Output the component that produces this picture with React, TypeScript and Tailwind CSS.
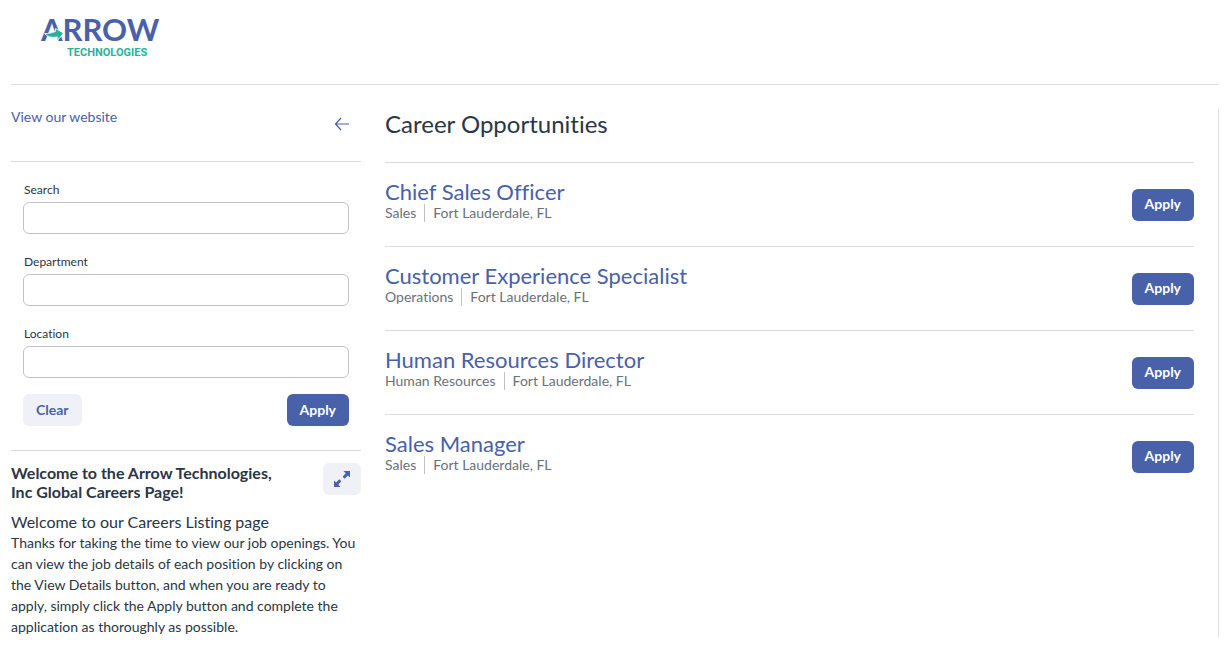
const jobs = [
  { title: "Chief Sales Officer", department: "Sales", location: "Fort Lauderdale, FL" },
  { title: "Customer Experience Specialist", department: "Operations", location: "Fort Lauderdale, FL" },
  { title: "Human Resources Director", department: "Human Resources", location: "Fort Lauderdale, FL" },
  { title: "Sales Manager", department: "Sales", location: "Fort Lauderdale, FL" },
];

function Logo() {
  return (
    <svg className="block h-12 w-32" viewBox="0 0 128 48" role="img" aria-label="Arrow Technologies">
      <text x="1" y="30" fill="#4961a8" fontFamily="Lato, sans-serif" fontSize="31" fontWeight="700">
        ARROW
      </text>
      <path
        d="M4.5 22.5 C8 23 12 21.5 15.5 20.5 L15.5 17.5 L23.5 22 L18.5 28.5 L17.5 25.8 C13 27 8 26.5 4.5 22.5 Z"
        fill="#26b39b"
        stroke="#ffffff"
        strokeWidth="0.8"
      />
      <text x="27" y="45" fill="#26b39b" fontFamily="Roboto, sans-serif" fontSize="11" fontWeight="700">
        TECHNOLOGIES
      </text>
    </svg>
  );
}

function ApplyButton() {
  return (
    <button type="button" className="h-8 shrink-0 rounded-md bg-[#4961a8] px-[13px] pb-px text-sm font-bold text-white">
      Apply
    </button>
  );
}

function Field({ id, label }: { id: string; label: string }) {
  return (
    <div className="flex flex-col gap-1">
      <label htmlFor={id} className="pl-px text-xs leading-4 text-[#2a3644]">
        {label}
      </label>
      <input id={id} type="text" className="h-8 w-full rounded-md border border-[#c3c3c5] bg-white px-2 text-sm" />
    </div>
  );
}

function Sidebar() {
  return (
    <aside className="flex w-[350px] shrink-0 flex-col">
      <div className="flex h-[53px] items-start justify-between border-b border-[#dcdddf] pr-[11px]">
        <a href="#website" className="text-sm leading-4 text-[#4961a8]">
          View our website
        </a>
        <button type="button" aria-label="Collapse panel" className="mt-[7px] text-[#4961a8]">
          <svg className="block h-4 w-4" viewBox="0 0 16 16" fill="none" stroke="currentColor" strokeWidth="1.2">
            <path d="M15 8H1.5M7 2L1.5 8L7 14" />
          </svg>
        </button>
      </div>
      <form className="flex flex-col border-b border-[#dcdddf] px-3 pt-5 pb-6" onSubmit={(e) => e.preventDefault()}>
        <div className="flex flex-col gap-5">
          <Field id="search" label="Search" />
          <Field id="department" label="Department" />
          <Field id="location" label="Location" />
        </div>
        <div className="mt-4 flex justify-between">
          <button type="reset" className="h-8 rounded-md bg-[#f0f1f7] px-[13px] text-sm font-bold text-[#4961a8]">
            Clear
          </button>
          <ApplyButton />
        </div>
      </form>
      <section className="pt-3 text-[#2a3644]">
        <div className="flex items-start justify-between">
          <h2 className="w-[280px] text-base leading-[19px] font-bold">
            Welcome to the Arrow Technologies, Inc Global Careers Page!
          </h2>
          <button
            type="button"
            aria-label="Expand"
            className="flex h-8 w-[38px] items-center justify-center rounded-md bg-[#f0f1f7] text-[#4961a8]"
          >
            <svg className="block h-4 w-4" viewBox="0 0 16 16" fill="currentColor">
              <path d="M9.5 0H16V6.5L13.9 4.4L10.6 7.7L8.6 5.7L11.7 2.3Z" />
              <path d="M0 9.5L2.1 11.6L5.3 8.3L7.3 10.3L4.3 13.7L6.5 16H0Z" />
            </svg>
          </button>
        </div>
        <h3 className="mt-[11px] text-base leading-5">Welcome to our Careers Listing page</h3>
        <p className="text-sm leading-[21px]">
          Thanks for taking the time to view our job openings. You can view the job details of each position by
          clicking on the View Details button, and when you are ready to apply, simply click the Apply button and
          complete the application as thoroughly as possible.
        </p>
      </section>
    </aside>
  );
}

export default function App() {
  return (
    <div className="bg-white pr-[5px] pb-5 pl-[11px] font-['Lato',sans-serif] [font-variant-ligatures:none]">
      <header className="border-b border-[#dcdddf] pt-[11px] pb-[25px] pl-[29px]">
        <Logo />
      </header>
      <div className="mt-6 flex gap-6">
        <Sidebar />
        <main className="min-w-0 flex-1 border-r border-[#dcdddf] pr-6">
          <h1 className="pb-6 text-2xl leading-[29px] text-[#2a3644]">Career Opportunities</h1>
          <ul>
            {jobs.map((job) => (
              <li key={job.title} className="flex h-[84px] items-center justify-between border-t border-[#dcdddf]">
                <div className="pb-2">
                  <a href="#job" className="block text-[22px] leading-6 text-[#4961a8]">
                    {job.title}
                  </a>
                  <div className="flex text-sm leading-[18px] text-[#6b7178]">
                    <span className="border-r border-[#c3c3c5] pr-2">{job.department}</span>
                    <span className="pl-2">{job.location}</span>
                  </div>
                </div>
                <ApplyButton />
              </li>
            ))}
          </ul>
        </main>
      </div>
    </div>
  );
}
